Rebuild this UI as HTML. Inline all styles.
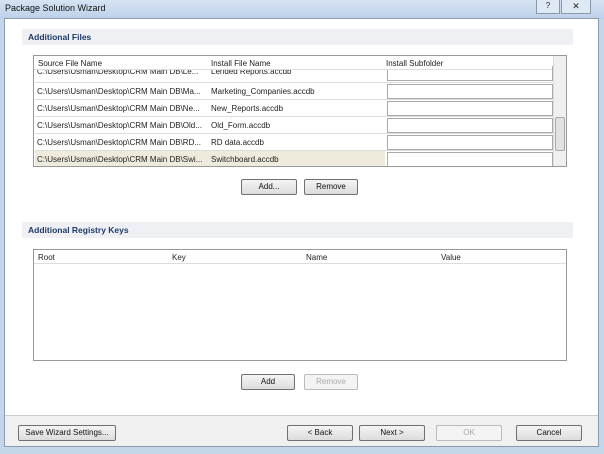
<!DOCTYPE html><html><head><style>
*{margin:0;padding:0;box-sizing:border-box}
body{width:604px;height:454px;overflow:hidden;background:#c4d6ea;font-family:"Liberation Sans",sans-serif;font-size:8px;color:#222;position:relative}
.a{position:absolute}
.btn{position:absolute;border:1px solid #707070;border-radius:2px;background:linear-gradient(#f4f4f4,#dcdcdc);text-align:center;line-height:14px;font-size:8px;color:#111}
.dis{color:#aaa;border-color:#bbb;background:#f4f4f4}
.hdr{position:absolute;left:22px;width:551px;height:16px;background:#eef0f3;font-weight:bold;color:#1e3a6a;font-size:8.5px;padding:3px 6px}
.row{position:absolute;left:1px;width:518px;height:17px;border-bottom:1px solid #ddd}
.row span{position:absolute;top:4px}
.box{position:absolute;left:352px;width:166px;height:15px;border:1px solid #aaa;background:#fff;top:1px}
</style></head><body>
<div class="a" style="left:0;top:0;width:604px;height:19px;background:linear-gradient(#d6e4f3,#bcd0e8)"></div>
<div class="a" style="left:5px;top:3px;font-size:9px;color:#111">Package Solution Wizard</div>
<div class="a" style="left:536px;top:0;width:24px;height:14px;border:1px solid #8899aa;border-top:0;background:#dfe9f5;text-align:center;font-size:8px;line-height:12px">?</div>
<div class="a" style="left:561px;top:0;width:30px;height:14px;border:1px solid #8899aa;border-top:0;background:#dfe9f5;text-align:center;font-size:9px;line-height:12px">✕</div>
<div class="a" style="left:4px;top:18px;width:595px;height:429px;background:#fff;border:1px solid #8a9bb0"></div>
<div class="hdr" style="top:29px">Additional Files</div>
<div class="a" style="left:33px;top:55px;width:534px;height:112px;border:1px solid #999;background:#fff;overflow:hidden">
<div class="row" style="top:10px;height:17px"><span style="left:2px;top:1px">C:\Users\Usman\Desktop\CRM Main DB\Le...</span><span style="left:176px;top:1px">Lended Reports.accdb</span><div class="box" style="top:0px;height:15px"></div></div>
<div class="a" style="left:0;top:0;width:518px;height:14px;border-bottom:1px solid #ddd;background:#fff;z-index:2"><span class="a" style="left:4px;top:3px">Source File Name</span><span class="a" style="left:177px;top:3px">Install File Name</span><span class="a" style="left:352px;top:3px">Install Subfolder</span></div>
<div class="row" style="top:27px"><span style="left:2px">C:\Users\Usman\Desktop\CRM Main DB\Ma...</span><span style="left:176px">Marketing_Companies.accdb</span><div class="box"></div></div>
<div class="row" style="top:44px"><span style="left:2px">C:\Users\Usman\Desktop\CRM Main DB\Ne...</span><span style="left:176px">New_Reports.accdb</span><div class="box"></div></div>
<div class="row" style="top:61px"><span style="left:2px">C:\Users\Usman\Desktop\CRM Main DB\Old...</span><span style="left:176px">Old_Form.accdb</span><div class="box"></div></div>
<div class="row" style="top:78px"><span style="left:2px">C:\Users\Usman\Desktop\CRM Main DB\RD...</span><span style="left:176px">RD data.accdb</span><div class="box"></div></div>
<div class="row" style="top:95px;background:linear-gradient(90deg,#eeebdc 350px,#fff 350px)"><span style="left:2px">C:\Users\Usman\Desktop\CRM Main DB\Swi...</span><span style="left:176px">Switchboard.accdb</span><div class="box"></div></div>
<div class="a" style="left:519px;top:0;width:14px;height:110px;background:#f0f0f0;border-left:1px solid #ddd;z-index:3"></div>
<div class="a" style="left:521px;top:61px;width:10px;height:34px;background:#e2e2e2;border:1px solid #aaa;border-radius:2px;z-index:4"></div>
</div>
<div class="btn" style="left:241px;top:179px;width:56px;height:16px">Add...</div>
<div class="btn" style="left:304px;top:179px;width:54px;height:16px">Remove</div>
<div class="hdr" style="top:222px">Additional Registry Keys</div>
<div class="a" style="left:33px;top:249px;width:534px;height:112px;border:1px solid #999;background:#fff">
<div class="a" style="left:0;top:0;width:532px;height:14px;border-bottom:1px solid #ddd"><span class="a" style="left:4px;top:3px">Root</span><span class="a" style="left:138px;top:3px">Key</span><span class="a" style="left:272px;top:3px">Name</span><span class="a" style="left:407px;top:3px">Value</span></div></div>
<div class="btn" style="left:241px;top:374px;width:54px;height:16px">Add</div>
<div class="btn dis" style="left:304px;top:374px;width:54px;height:16px">Remove</div>
<div class="a" style="left:5px;top:415px;width:593px;height:31px;background:#f0f0f0;border-top:1px solid #ccc"></div>
<div class="btn" style="left:18px;top:425px;width:98px;height:16px">Save Wizard Settings...</div>
<div class="btn" style="left:287px;top:425px;width:66px;height:16px">&lt; Back</div>
<div class="btn" style="left:359px;top:425px;width:66px;height:16px">Next &gt;</div>
<div class="btn dis" style="left:436px;top:425px;width:66px;height:16px">OK</div>
<div class="btn" style="left:516px;top:425px;width:66px;height:16px">Cancel</div>
</body></html>
